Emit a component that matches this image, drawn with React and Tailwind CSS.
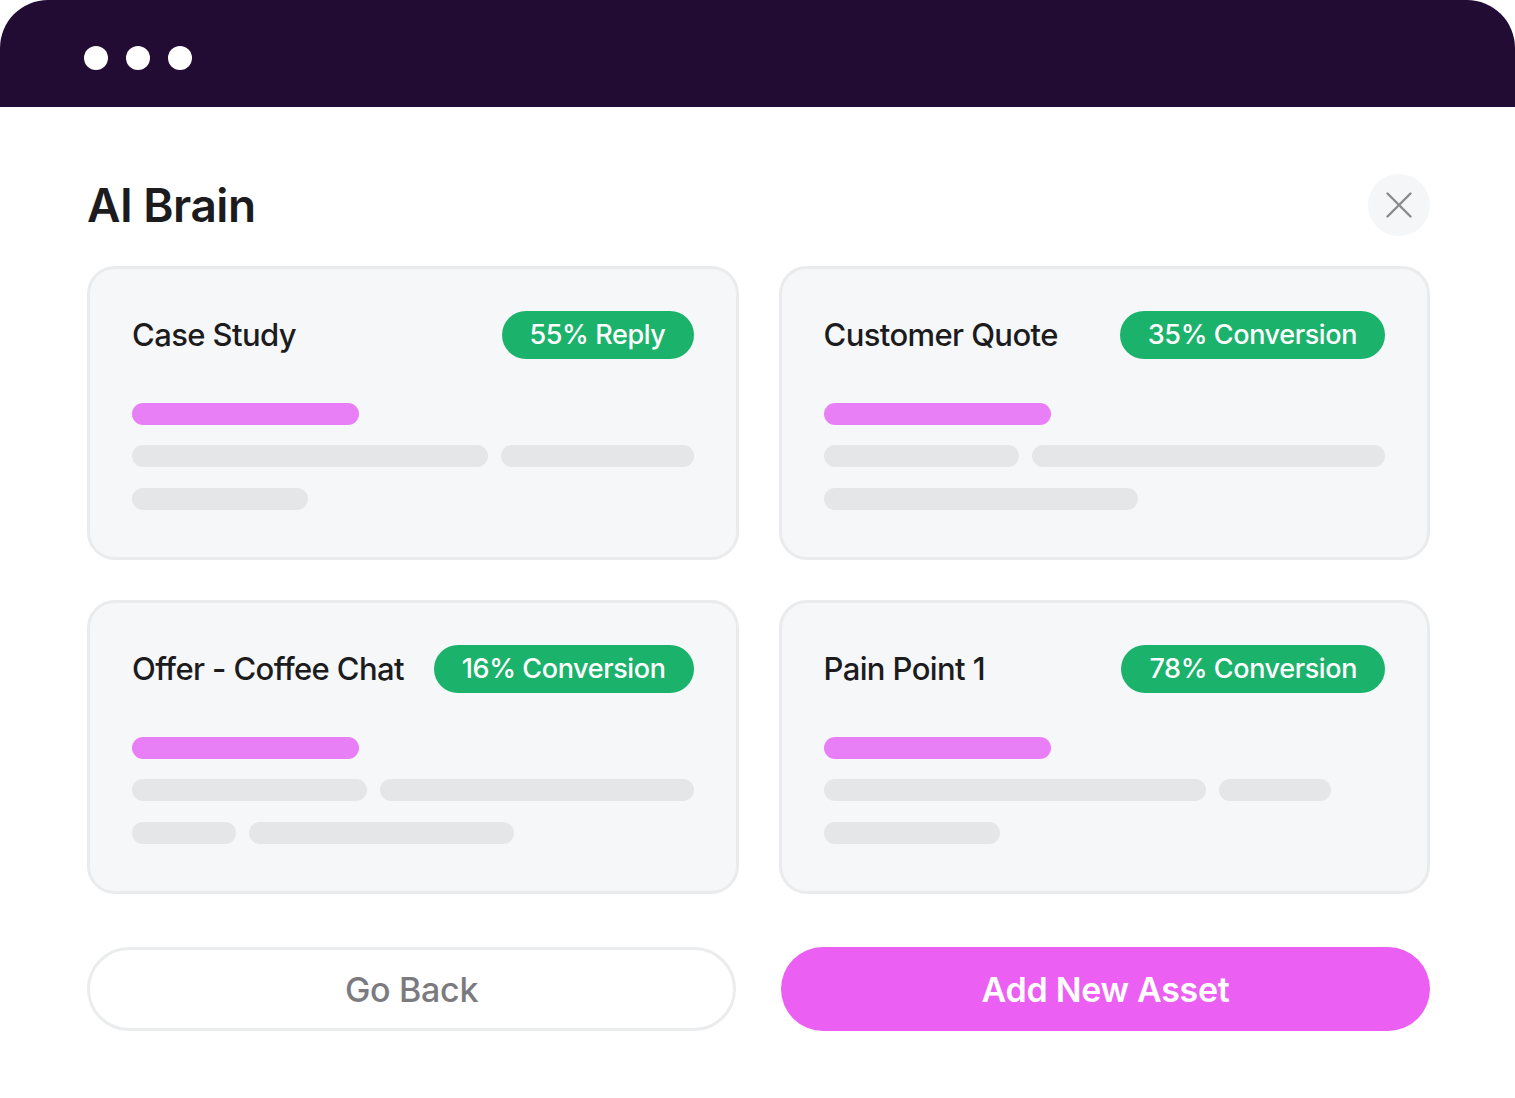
const cards = [
  {
    title: 'Case Study',
    badge: '55% Reply',
    rows: [['w-[356px]', 'flex-1'], ['w-[176px]']],
  },
  {
    title: 'Customer Quote',
    badge: '35% Conversion',
    rows: [['w-[195px]', 'flex-1'], ['w-[314px]']],
  },
  {
    title: 'Offer - Coffee Chat',
    badge: '16% Conversion',
    rows: [['w-[235px]', 'flex-1'], ['w-[104px]', 'w-[265px]']],
  },
  {
    title: 'Pain Point 1',
    badge: '78% Conversion',
    rows: [['w-[382px]', 'w-[112px]'], ['w-[176px]']],
  },
];

const AssetCard = ({ card }) => (
  <div className="h-[294px] rounded-[28px] border-[3px] border-[#eaebec] bg-[#f6f7f9] px-[42px] pt-[42px]">
    <div className="flex h-[48px] items-center justify-between">
      <span className="text-[31px] font-medium tracking-[-0.6px] text-[#1c1c1e]">{card.title}</span>
      <span className="flex h-[48px] items-center rounded-full bg-[#1bb26b] px-[28px] text-[27px] font-medium tracking-[-0.4px] text-white">
        {card.badge}
      </span>
    </div>
    {/* placeholder text lines */}
    <div className="mt-[44px] h-[22px] w-[227px] rounded-full bg-[#e97ff6]" />
    <div className="mt-[20px] flex flex-col gap-[21px]">
      {card.rows.map((row, i) => (
        <div key={i} className="flex gap-[13px]">
          {row.map((w, j) => (
            <div key={j} className={`h-[22px] rounded-full bg-[#e5e6e8] ${w}`} />
          ))}
        </div>
      ))}
    </div>
  </div>
);

const App = () => {
  return (
    <div className="min-h-screen bg-white font-['Inter',sans-serif]">
      {/* Window bar */}
      <div className="flex h-[107px] items-start gap-[18px] rounded-t-[48px] bg-[#230c33] pl-[84px] pt-[46px]">
        <span className="h-[24px] w-[24px] rounded-full bg-white" />
        <span className="h-[24px] w-[24px] rounded-full bg-white" />
        <span className="h-[24px] w-[24px] rounded-full bg-white" />
      </div>

      <div className="pl-[87px] pr-[85px] pt-[67px]">
        {/* Header */}
        <div className="flex h-[62px] items-center justify-between">
          <h1 className="text-[46px] leading-none font-semibold tracking-[-0.5px] text-[#1c1c1e]">AI Brain</h1>
          <button className="flex h-[62px] w-[62px] items-center justify-center rounded-full bg-[#f5f6f7]">
            <svg width="26" height="26" viewBox="0 0 26 26" fill="none" stroke="#8b8b8d" strokeWidth="2.4" strokeLinecap="round">
              <path d="M1.5 1.5l23 23M24.5 1.5l-23 23" />
            </svg>
          </button>
        </div>

        {/* Cards */}
        <div className="mt-[30px] grid grid-cols-2 gap-[40px]">
          {cards.map((c) => (
            <AssetCard key={c.title} card={c} />
          ))}
        </div>

        {/* Actions */}
        <div className="mt-[53px] grid grid-cols-2 gap-[45px]">
          <button className="h-[84px] rounded-full border-[3px] border-[#ebeced] bg-white text-[34px] font-medium tracking-[-0.3px] text-[#7b7b7f]">
            Go Back
          </button>
          <button className="h-[84px] rounded-full bg-[#eb5ff3] text-[34px] font-semibold tracking-[-0.3px] text-white">
            Add New Asset
          </button>
        </div>
      </div>
    </div>
  );
};

export default App;
